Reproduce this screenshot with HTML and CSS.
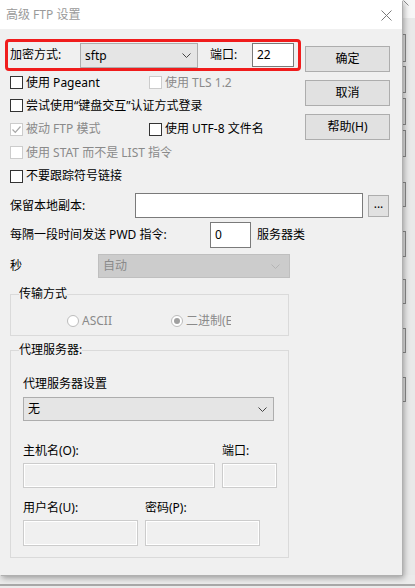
FILE: index.html
```html
<!DOCTYPE html>
<html lang="zh-CN">
<head>
<meta charset="utf-8">
<title>高级 FTP 设置</title>
<link rel="stylesheet" href="styles.css">
</head>
<body>
<div class="screen">
  <div class="upper">
    <div class="dialog">
      <div class="titlebar">
        <span class="title">高级 FTP 设置</span>
        <svg class="close" width="11" height="11" viewBox="0 0 11 11"><path d="M0.5 0.5L10.5 10.5M10.5 0.5L0.5 10.5" stroke="#7a7a7a" stroke-width="1" fill="none"/></svg>
      </div>
      <div class="content">
        <div class="top">
          <div class="opts">
            <div class="enc-row">
              <span class="enc-label">加密方式:</span>
              <div class="combo enc-combo"><span>sftp</span><svg class="chev" width="9" height="5" viewBox="0 0 9 5"><path d="M0.5 0.5L4.5 4.5L8.5 0.5" stroke="#444" fill="none"/></svg></div>
              <span class="port-label">端口:</span>
              <div class="input port-input">22</div>
            </div>
            <div class="row r23">
              <label class="check col1"><span class="cb"></span>使用 Pageant</label>
              <label class="check disabled"><span class="cb"></span>使用 TLS 1.2</label>
            </div>
            <div class="row r23">
              <label class="check"><span class="cb"></span>尝试使用“键盘交互”认证方式登录</label>
            </div>
            <div class="row r24">
              <label class="check col1 disabled"><span class="cb"><svg width="11" height="11" viewBox="0 0 11 11"><path d="M1.5 5.5L4.3 8.3L9.5 2.5" stroke="#a8a8a8" stroke-width="1.2" fill="none"/></svg></span>被动 FTP 模式</label>
              <label class="check"><span class="cb"></span>使用 UTF-8 文件名</label>
            </div>
            <div class="row r23">
              <label class="check disabled"><span class="cb"></span>使用 STAT 而不是 LIST 指令</label>
            </div>
            <div class="row r24">
              <label class="check"><span class="cb"></span>不要跟踪符号链接</label>
            </div>
          </div>
          <div class="buttons">
            <div class="btn">确定</div>
            <div class="btn">取消</div>
            <div class="btn">帮助(H)</div>
          </div>
        </div>

        <div class="field-row keep-row">
          <span class="keep-label">保留本地副本:</span>
          <div class="input keep-input"></div>
          <div class="btn dots">...</div>
        </div>

        <div class="field-row pwd-row">
          <span class="pwd-label">每隔一段时间发送 PWD 指令:</span>
          <div class="input pwd-input">0</div>
          <span class="pwd-after">服务器类</span>
        </div>

        <div class="field-row sec-row">
          <span class="sec-label">秒</span>
          <div class="combo sec-combo"><span>自动</span><svg class="chev" width="9" height="5" viewBox="0 0 9 5"><path d="M0.5 0.5L4.5 4.5L8.5 0.5" stroke="#b4b4b4" fill="none"/></svg></div>
        </div>

        <fieldset class="group transfer">
          <legend>传输方式</legend>
          <div class="radios">
            <label class="radio ascii"><span class="rb"></span>ASCII</label>
            <label class="radio binary"><span class="rb on"></span><span class="clip">二进制(E</span></label>
          </div>
        </fieldset>

        <fieldset class="group proxy">
          <legend>代理服务器:</legend>
          <div class="proxy-body">
            <div class="plabel set-label">代理服务器设置</div>
            <div class="combo proxy-combo"><span>无</span><svg class="chev" width="9" height="5" viewBox="0 0 9 5"><path d="M0.5 0.5L4.5 4.5L8.5 0.5" stroke="#444" fill="none"/></svg></div>
            <div class="grid host-grid">
              <span class="plabel">主机名(O):</span>
              <span class="plabel">端口:</span>
              <div class="input dis h25"></div>
              <div class="input dis h25"></div>
            </div>
            <div class="grid user-grid">
              <span class="plabel">用户名(U):</span>
              <span class="plabel">密码(P):</span>
              <div class="input dis h26"></div>
              <div class="input dis h26"></div>
            </div>
          </div>
        </fieldset>
      </div>
    </div>
    <div class="side">
      <div class="side-top"><svg width="6" height="7" viewBox="0 0 6 7"><path d="M0.5 0.5L5.5 5.5" stroke="#8a8a8a" fill="none"/></svg></div>
      <div class="edge e1"></div>
      <div class="edge e2"></div>
      <div class="edge e3"></div>
      <div class="edge e4"></div>
      <div class="edge e5"></div>
      <div class="edge e6"></div>
      <div class="edge e7"></div>
      <div class="edge e8"></div>
      <div class="edge e9"></div>
    </div>
  </div>
  <div class="under"><div class="under-line"></div></div>
</div>
</body>
</html>
```
FILE: styles.css
```css
* { box-sizing: border-box; }

body {
  margin: 0;
  width: 415px;
  height: 588px;
  overflow: hidden;
  background: #f0f0f0;
  font-family: "Noto Sans", "Noto Sans CJK SC", sans-serif;
  font-size: 12px;
  line-height: 16px;
  color: #000;
}

.screen { display: flex; flex-direction: column; height: 588px; }
.upper { display: flex; height: 575px; }

.dialog {
  position: relative;
  z-index: 1;
  width: 402px;
  height: 575px;
  background: #f0f0f0;
  box-shadow: 1px 1px 0 #b0b0b0, 2px 3px 6px rgba(0, 0, 0, 0.35);
}

.titlebar {
  height: 29px;
  background: #fff;
  display: flex;
  align-items: center;
  justify-content: space-between;
  padding: 0 10px 0 6px;
}
.title { color: #9a9a9a; }
.close { margin-top: 1px; }

.content { padding: 10px 0 0 5px; }

.top { display: flex; gap: 4px; }
.opts { width: 296px; }

.enc-row {
  height: 32px;
  border: 3px solid #f01c1c;
  border-radius: 4px;
  display: flex;
  align-items: center;
  padding-left: 2px;
}
.enc-label { width: 70px; }
.combo {
  display: flex;
  align-items: center;
  justify-content: space-between;
  background: #e5e5e5;
  border: 1px solid #adadad;
  padding: 0 6px 0 4px;
}
.enc-combo { width: 118px; height: 25px; margin-top: 1px; }
.port-label { margin-left: 12px; width: 42px; }
.input {
  background: #fff;
  border: 1px solid #7a7a7a;
  padding: 0 4px;
  display: flex;
  align-items: center;
}
.port-input { width: 42px; height: 24px; }

.row { display: flex; align-items: center; padding-left: 5px; }
.r23 { height: 23px; }
.r24 { height: 24px; }

.check { display: flex; align-items: center; gap: 3px; white-space: nowrap; }
.col1 { width: 139px; }
.cb {
  width: 13px;
  height: 13px;
  border: 1px solid #333;
  background: #fff;
  display: flex;
  align-items: center;
  justify-content: center;
}
.disabled { color: #8a8a8a; }
.disabled .cb { border-color: #cccccc; }

.buttons {
  display: flex;
  flex-direction: column;
  gap: 8px;
  padding-top: 7px;
}
.btn {
  width: 85px;
  height: 26px;
  background: #e1e1e1;
  border: 1px solid #adadad;
  display: flex;
  align-items: center;
  justify-content: center;
}

.field-row { display: flex; align-items: center; padding-left: 5px; }
.keep-row { margin-top: 5px; height: 25px; }
.keep-label { width: 125px; }
.keep-input { width: 228px; height: 25px; }
.dots { width: 21px; height: 22px; margin-left: 5px; padding-bottom: 4px; }

.pwd-row { margin-top: 4px; height: 26px; }
.pwd-label { width: 200px; }
.pwd-input { width: 41px; height: 26px; }
.pwd-after { margin-left: 6px; }

.sec-row { margin-top: 6px; height: 24px; }
.sec-label { width: 88px; }
.sec-combo {
  width: 192px;
  height: 24px;
  background: #cccccc;
  border-color: #bfbfbf;
  color: #8a8a8a;
  padding-right: 9px;
}

.group {
  margin: 0 0 0 5px;
  width: 279px;
  border: 1px solid #dadada;
  padding: 0 0 0 8px;
  min-width: 0;
}
.group legend { padding: 0; line-height: 16px; }

.transfer { margin-top: 8px; padding-top: 9px; padding-bottom: 4px; }
.radios { display: flex; height: 20px; align-items: center; }
.radio { display: flex; align-items: center; gap: 3px; color: #8a8a8a; white-space: nowrap; }
.ascii { margin-left: 48px; width: 104px; }
.rb {
  width: 12px;
  height: 12px;
  border-radius: 50%;
  border: 1px solid #bcbcbc;
  background: #fff;
  display: flex;
  align-items: center;
  justify-content: center;
}
.rb.on::after {
  content: "";
  width: 6px;
  height: 6px;
  border-radius: 50%;
  background: #a0a0a0;
}
.clip { display: block; width: 45px; overflow: hidden; }

.proxy { margin-top: 6px; padding-bottom: 11px; }
.proxy-body { padding: 18px 0 0 4px; }
.plabel { display: block; height: 16px; }
.proxy-combo { width: 251px; height: 24px; margin-top: 5px; }
.grid { display: grid; column-gap: 7px; row-gap: 4px; }
.host-grid { grid-template-columns: 192px 55px; margin-top: 22px; }
.user-grid { grid-template-columns: 115px 115px; margin-top: 12px; }
.input.dis {
  background: #f0f0f0;
  border: 1px solid #cccccc;
  box-shadow: inset 0 0 0 1px #ffffff;
}
.h25 { height: 25px; }
.h26 { height: 26px; }

.side {
  flex: 1;
  display: flex;
  flex-direction: column;
  background: #e9e9e9;
}
.side-top { height: 18px; background: #f7f7f7; display: flex; padding-left: 1px; }
.edge {
  width: 4px;
  background: #dedede;
  border: 1px solid #8a8a8a;
  border-left: none;
}
.e1 { margin-top: 16px; height: 28px; }
.e2 { margin-top: 4px; height: 27px; }
.e3 { margin-top: 5px; height: 27px; }
.e4 { margin-top: 5px; height: 27px; }
.e5 { margin-top: 25px; height: 25px; }
.e6 { margin-top: 24px; height: 26px; }
.e7 { margin-top: 22px; height: 25px; }
.e8 { margin-top: 24px; height: 25px; }
.e9 { margin-top: 24px; height: 25px; }

.under { height: 13px; background: #ebebeb; padding-top: 9px; }
.under-line { height: 2px; background: #a8a8a8; }
```
